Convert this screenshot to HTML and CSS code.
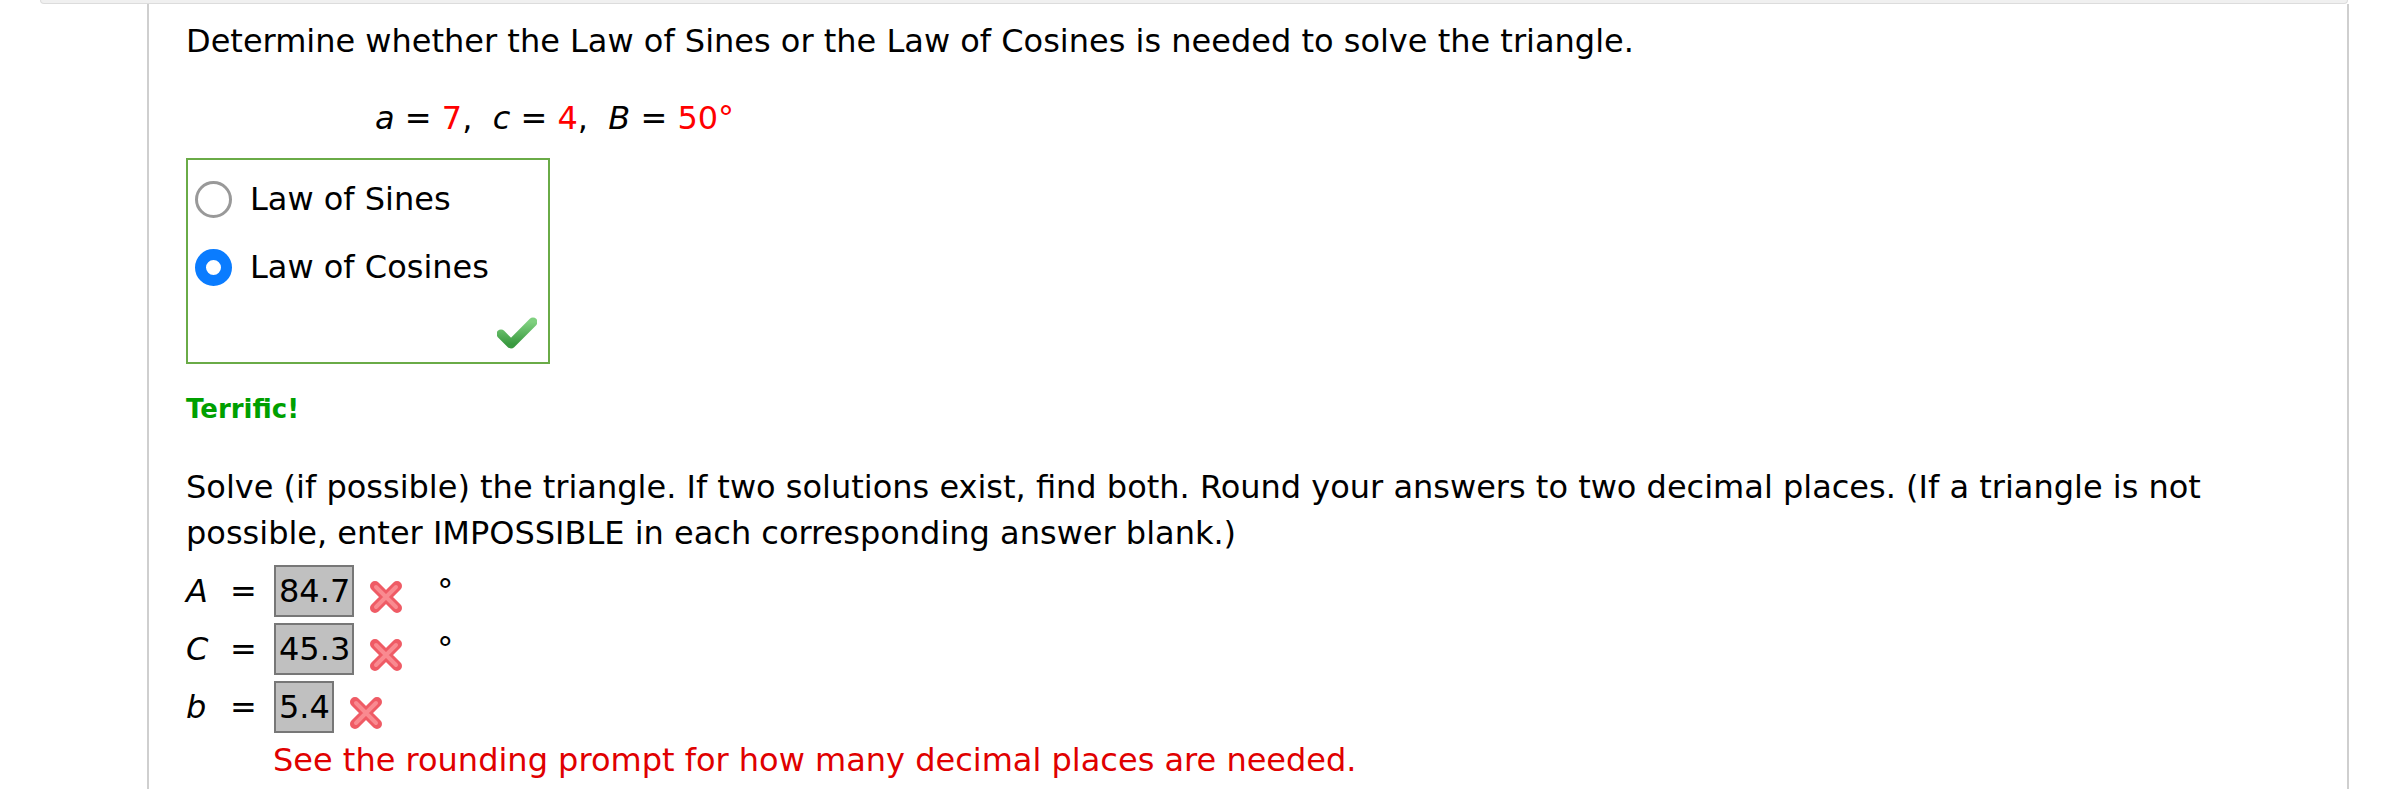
FILE: index.html
```html
<!DOCTYPE html>
<html>
<head>
<meta charset="utf-8">
<link rel="stylesheet" href="styles.css">
</head>
<body>
<div class="topbar"></div>
<div class="panel">
  <p class="heading">Determine whether the Law of Sines or the Law of Cosines is needed to solve the triangle.</p>
  <p class="formula"><i>a</i> = <span class="num">7</span>,&nbsp; <i>c</i> = <span class="num">4</span>,&nbsp; <i>B</i> = <span class="num">50°</span></p>
  <div class="choices">
    <div class="choice"><span class="radio"></span><span class="label">Law of Sines</span></div>
    <div class="choice"><span class="radio checked"></span><span class="label">Law of Cosines</span></div>
    <div class="check-row">
      <svg class="check" viewBox="0 0 40 32" width="40" height="32">
        <defs>
          <linearGradient id="g" x1="0" y1="0" x2="0" y2="1">
            <stop offset="0" stop-color="#7fd07f"/>
            <stop offset="1" stop-color="#3a9a40"/>
          </linearGradient>
        </defs>
        <path d="M4 17 L14 27 L36 5" fill="none" stroke="url(#g)" stroke-width="9" stroke-linecap="round" stroke-linejoin="round"/>
      </svg>
    </div>
  </div>
  <p class="feedback">Terrific!</p>
  <p class="solve">Solve (if possible) the triangle. If two solutions exist, find both. Round your answers to two decimal places. (If a triangle is not possible, enter IMPOSSIBLE in each corresponding answer blank.)</p>
  <div class="answers">
    <div class="row">
      <span class="var"><i>A</i></span><span class="eq">=</span><span class="box">84.7</span>
      <svg class="xmark" viewBox="0 0 34 34" width="34" height="34"><path d="M6 6 L28 28 M28 6 L6 28" stroke="#ef5b65" stroke-width="10" stroke-linecap="round"/><path d="M7 7 L27 27 M27 7 L7 27" stroke="#f98a90" stroke-width="4" stroke-linecap="round"/></svg>
      <span class="deg">°</span>
    </div>
    <div class="row">
      <span class="var"><i>C</i></span><span class="eq">=</span><span class="box">45.3</span>
      <svg class="xmark" viewBox="0 0 34 34" width="34" height="34"><path d="M6 6 L28 28 M28 6 L6 28" stroke="#ef5b65" stroke-width="10" stroke-linecap="round"/><path d="M7 7 L27 27 M27 7 L7 27" stroke="#f98a90" stroke-width="4" stroke-linecap="round"/></svg>
      <span class="deg">°</span>
    </div>
    <div class="row">
      <span class="var"><i>b</i></span><span class="eq">=</span><span class="box">5.4</span>
      <svg class="xmark" viewBox="0 0 34 34" width="34" height="34"><path d="M6 6 L28 28 M28 6 L6 28" stroke="#ef5b65" stroke-width="10" stroke-linecap="round"/><path d="M7 7 L27 27 M27 7 L7 27" stroke="#f98a90" stroke-width="4" stroke-linecap="round"/></svg>
    </div>
  </div>
  <p class="hint">See the rounding prompt for how many decimal places are needed.</p>
</div>
</body>
</html>
```
FILE: styles.css
```css
html, body {
  margin: 0;
  padding: 0;
  background: #fff;
}
body {
  font-family: "DejaVu Sans", Verdana, sans-serif;
  font-size: 32px;
  color: #000;
  overflow: hidden;
}
.topbar {
  margin-left: 40px;
  width: 2306px;
  height: 3px;
  background: #f0f0f0;
  border: 1px solid #dcdcdc;
  border-top: none;
  border-radius: 0 0 5px 5px;
}
.panel {
  margin-left: 147px;
  width: 2161px;
  min-height: 800px;
  border-left: 2px solid #cfcfcf;
  border-right: 2px solid #cfcfcf;
  padding: 19px 0 0 37px;
}
p {
  margin: 0;
}
.heading {
  line-height: 37px;
}
.formula {
  line-height: 37px;
  margin-top: 40px;
  padding-left: 189px;
}
.num {
  color: #ff0000;
}
.choices {
  margin-top: 21px;
  width: 342px;
  border: 2px solid #6aab47;
  padding: 17px 11px 15px 7px;
  display: flex;
  flex-direction: column;
  gap: 24px;
}
.choice {
  display: flex;
  align-items: center;
  height: 44px;
  gap: 18px;
}
.radio {
  width: 31px;
  height: 31px;
  border: 3px solid #999;
  border-radius: 50%;
  background: #fff;
  flex: none;
}
.radio.checked {
  width: 15px;
  height: 15px;
  border: 11px solid #0a7cff;
}
.label {
  line-height: 37px;
}
.check-row {
  display: flex;
  justify-content: flex-end;
  height: 30px;
  margin-top: 4px;
}
.check {
  display: block;
}
.feedback {
  margin-top: 29px;
  font-size: 26px;
  font-weight: bold;
  color: #00a000;
  line-height: 32px;
}
.solve {
  margin-top: 39px;
  line-height: 46px;
  width: 2130px;
}
.answers {
  margin-top: 9px;
  display: flex;
  flex-direction: column;
  gap: 6px;
}
.row {
  display: flex;
  align-items: center;
  height: 52px;
}
.var {
  width: 44px;
  line-height: 37px;
}
.eq {
  width: 44px;
  line-height: 37px;
}
.box {
  box-sizing: border-box;
  height: 52px;
  line-height: 48px;
  padding: 0 2px 0 3px;
  border: 2px solid #777;
  background: #c0c0c0;
}
.xmark {
  margin-left: 15px;
  margin-top: 12px;
  display: block;
}
.deg {
  margin-left: 34px;
  line-height: 37px;
  margin-top: 0;
}
.hint {
  margin-top: 9px;
  padding-left: 87px;
  line-height: 37px;
  color: #e00000;
}
```
